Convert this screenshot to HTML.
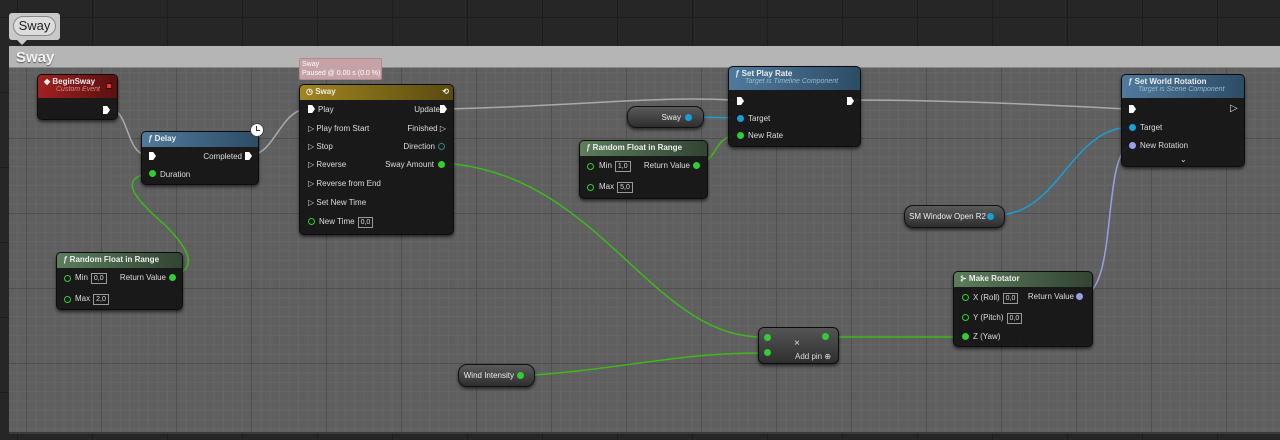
<!DOCTYPE html>
<html><head><meta charset="utf-8"><style>
*{margin:0;padding:0;box-sizing:border-box}
body{width:1280px;height:440px;overflow:hidden;background:#262626;font-family:"Liberation Sans",sans-serif;position:relative;
background-image:linear-gradient(90deg,#1c1c1c 1px,transparent 1px),linear-gradient(#1c1c1c 1px,transparent 1px);background-size:75px 75px;background-position:17px 17px}
.cm{position:absolute;left:9px;top:46px;width:1271px;height:388px;background-color:#5f5f5f;
background-image:linear-gradient(90deg,#4f4f4f 1px,transparent 1px),linear-gradient(#4f4f4f 1px,transparent 1px),linear-gradient(90deg,#666 1px,transparent 1px),linear-gradient(#666 1px,transparent 1px);
background-size:75px 75px,75px 75px,9.375px 9.375px,9.375px 9.375px;background-position:17px 0,0 17px,17px 0,0 17px;border-bottom:2px solid #3a3a3a}
.ch{position:absolute;left:9px;top:46px;width:1271px;height:22px;background:#b5b5b5;color:#f4f4f4;font-weight:bold;font-size:15px;padding:3px 0 0 7px;text-shadow:0 1px 1px #555;border-bottom:1px solid #888}
.bubble{position:absolute;left:9px;top:13px;width:51px;height:27px;background:#c9c9c9;border-radius:3px}
.bubble:after{content:"";position:absolute;left:8px;bottom:-5px;border-left:5px solid transparent;border-right:5px solid transparent;border-top:5px solid #c9c9c9}
.bubble span{position:absolute;left:4px;top:3px;width:43px;height:20px;border:1px solid #888;border-radius:10px;background:#ddd;font-size:13px;color:#222;text-align:center;line-height:18px}
.n{position:absolute;background:rgba(20,20,20,.92);border:1px solid #0c0c0c;border-radius:5px;box-shadow:0 2px 3px rgba(0,0,0,.6);color:#ddd;font-size:8px}
.h{height:15px;border-radius:4px 4px 0 0;padding:2px 0 0 6px;color:#eee;font-weight:bold;font-size:8px}
.blue{background:linear-gradient(90deg,#4f7a9c,#2d4c66)}
.green{background:linear-gradient(90deg,#5c7d5c,#324432)}
.p{position:absolute;font-size:8px;color:#ddd;white-space:nowrap}
.v{display:inline-block;border:1px solid #999;padding:0 2px;font-size:7px;line-height:9px;margin-left:3px}
.var{position:absolute;border-radius:9px;background:linear-gradient(#5a5a5a,#2e2e2e);border:1px solid #111;box-shadow:0 2px 3px rgba(0,0,0,.6);color:#eee;font-size:8px;text-align:right;padding:6px 18px 0 0;white-space:nowrap}
.dot{position:absolute;width:7px;height:7px;border-radius:50%}
.exe{position:absolute;width:7px;height:8px;background:#fff;clip-path:polygon(0 0,60% 0,100% 50%,60% 100%,0 100%)}
</style></head><body>
<div class="bubble"><span>Sway</span></div>
<div class="cm"></div>
<div class="ch">Sway</div>

<svg style="position:absolute;left:0;top:0" width="1280" height="440" fill="none">
<g stroke="#aaa" stroke-width="1.5">
<path d="M109 109 C130 109,125 155,148 155"/>
<path d="M250 155 C275 155,280 109,308 109"/>
<path d="M445 109 C600 105,650 96,735 100"/>
<path d="M852 100 C950 100,1050 105,1128 109"/>
</g>
<g stroke="#3cba1a" stroke-width="1.5">
<path d="M150 173 C120 178,130 195,165 225 C200 260,190 270,172 277"/>
<path d="M440 163 C600 170,650 340,765 337"/>
<path d="M520 376 C620 370,680 352,765 353"/>
<path d="M825 337 L958 337"/>
<path d="M697 165 C720 160,712 135,740 135"/>
</g>
<path d="M690 117 L740 118" stroke="#1a9ed8" stroke-width="1.5"/>
<path d="M996 215 C1060 215,1070 127,1132 127" stroke="#1a9ed8" stroke-width="1.5"/>
<path d="M1080 296 C1120 296,1100 150,1132 145" stroke="#9a9ee8" stroke-width="1.5"/>
</svg>

<div class="n" style="left:37px;top:74px;width:81px;height:46px">
<div style="height:23px;background:linear-gradient(90deg,#a02020,#5a1010);border-radius:4px 4px 0 0;padding:2px 0 0 6px;font-weight:bold;color:#eee">◆ BeginSway<div style="font-weight:normal;font-style:italic;color:#d88;font-size:7px;padding-left:12px">Custom Event</div></div>
<div style="position:absolute;right:5px;top:8px;width:6px;height:6px;background:#e33;border:1px solid #300"></div>
<div class="exe" style="left:65px;top:31px"></div></div>

<div class="n" style="left:141px;top:131px;width:118px;height:54px">
<div class="h blue"><i>ƒ</i> Delay</div>
<div class="exe" style="left:7px;top:20px"></div>
<div class="p" style="right:16px;top:20px">Completed</div><div class="exe" style="left:103px;top:20px"></div>
<div class="dot" style="left:7px;top:38px;background:#3c3"></div><div class="p" style="left:18px;top:38px">Duration</div></div>
<div style="position:absolute;left:250px;top:123px;width:14px;height:14px;border-radius:50%;background:#fff;border:1px solid #444"><div style="position:absolute;left:5px;top:2px;width:4px;height:5px;border-left:1px solid #333;border-bottom:1px solid #333"></div></div>

<div style="position:absolute;left:299px;top:58px;width:83px;height:22px;background:#c5a2a6;border:1px solid #b08a8e;border-radius:2px;color:#fff;font-size:7px;padding:1px 2px;line-height:9px;white-space:nowrap;overflow:hidden">Sway<br>Paused @ 0.00 s (0.0 %)</div>

<div class="n" style="left:299px;top:84px;width:155px;height:151px">
<div class="h" style="background:linear-gradient(90deg,#a0861f,#5a4a10)">◷ Sway<span style="position:absolute;right:4px">⟲</span></div>
<div class="exe" style="left:8px;top:20px"></div><div class="p" style="left:18px;top:20px">Play</div>
<div class="p" style="right:13px;top:20px">Update</div><div class="exe" style="left:140px;top:20px"></div>
<div class="p" style="left:8px;top:39px">▷ Play from Start</div><div class="p" style="right:7px;top:39px">Finished ▷</div>
<div class="p" style="left:8px;top:57px">▷ Stop</div><div class="p" style="right:18px;top:57px">Direction</div><div class="dot" style="left:138px;top:58px;border:1.5px solid #2a8a88"></div>
<div class="p" style="left:8px;top:75px">▷ Reverse</div><div class="p" style="right:19px;top:75px">Sway Amount</div><div class="dot" style="left:138px;top:76px;background:#3c3"></div>
<div class="p" style="left:8px;top:94px">▷ Reverse from End</div>
<div class="p" style="left:8px;top:113px">▷ Set New Time</div>
<div class="dot" style="left:8px;top:133px;border:1.5px solid #3c3"></div><div class="p" style="left:19px;top:132px">New Time<span class="v">0,0</span></div></div>

<div class="n" style="left:56px;top:252px;width:127px;height:58px">
<div class="h green"><i>ƒ</i> Random Float in Range</div>
<div class="dot" style="left:7px;top:22px;border:1.5px solid #3c3"></div><div class="p" style="left:18px;top:20px">Min<span class="v">0,0</span></div>
<div class="p" style="right:16px;top:20px">Return Value</div><div class="dot" style="left:112px;top:21px;background:#3c3"></div>
<div class="dot" style="left:7px;top:43px;border:1.5px solid #3c3"></div><div class="p" style="left:18px;top:41px">Max<span class="v">2,0</span></div></div>

<div class="var" style="left:627px;top:106px;width:77px;height:22px;padding-right:22px">Sway</div><div class="dot" style="left:685px;top:114px;background:#1a9ed8"></div>

<div class="n" style="left:728px;top:66px;width:133px;height:81px">
<div style="height:23px;background:linear-gradient(90deg,#4f7a9c,#2d4c66);border-radius:4px 4px 0 0;padding:2px 0 0 6px;font-weight:bold;color:#eee"><i>ƒ</i> Set Play Rate<div style="font-weight:normal;font-style:italic;color:#9bc;font-size:7px;padding-left:10px">Target is Timeline Component</div></div>
<div class="exe" style="left:8px;top:30px"></div><div class="exe" style="left:118px;top:30px"></div>
<div class="dot" style="left:8px;top:48px;background:#1a9ed8"></div><div class="p" style="left:19px;top:47px">Target</div>
<div class="dot" style="left:8px;top:65px;background:#3c3"></div><div class="p" style="left:19px;top:64px">New Rate</div></div>

<div class="n" style="left:579px;top:140px;width:129px;height:59px">
<div class="h green"><i>ƒ</i> Random Float in Range</div>
<div class="dot" style="left:7px;top:22px;border:1.5px solid #3c3"></div><div class="p" style="left:19px;top:20px">Min<span class="v">1,0</span></div>
<div class="p" style="right:17px;top:20px">Return Value</div><div class="dot" style="left:113px;top:21px;background:#3c3"></div>
<div class="dot" style="left:7px;top:43px;border:1.5px solid #3c3"></div><div class="p" style="left:19px;top:41px">Max<span class="v">5,0</span></div></div>

<div class="n" style="left:1121px;top:74px;width:124px;height:93px">
<div style="height:23px;background:linear-gradient(90deg,#4f7a9c,#2d4c66);border-radius:4px 4px 0 0;padding:2px 0 0 6px;font-weight:bold;color:#eee"><i>ƒ</i> Set World Rotation<div style="font-weight:normal;font-style:italic;color:#9bc;font-size:7px;padding-left:10px">Target is Scene Component</div></div>
<div class="exe" style="left:7px;top:30px"></div><div class="p" style="left:108px;top:28px;font-size:10px">▷</div>
<div class="dot" style="left:7px;top:49px;background:#1a9ed8"></div><div class="p" style="left:18px;top:48px">Target</div>
<div class="dot" style="left:7px;top:67px;background:#9a9ee8"></div><div class="p" style="left:18px;top:66px">New Rotation</div>
<div class="p" style="left:58px;top:80px">⌄</div></div>

<div class="var" style="left:904px;top:205px;width:101px;height:23px">SM Window Open R2</div><div class="dot" style="left:987px;top:213px;background:#1a9ed8"></div>

<div class="n" style="left:953px;top:271px;width:140px;height:76px">
<div class="h green">⊱ Make Rotator</div>
<div class="dot" style="left:8px;top:22px;border:1.5px solid #3c3"></div><div class="p" style="left:19px;top:21px">X (Roll)<span class="v">0,0</span></div>
<div class="p" style="right:18px;top:20px">Return Value</div><div class="dot" style="left:122px;top:21px;background:#9a9ee8"></div>
<div class="dot" style="left:8px;top:42px;border:1.5px solid #3c3"></div><div class="p" style="left:19px;top:41px">Y (Pitch)<span class="v">0,0</span></div>
<div class="dot" style="left:8px;top:61px;background:#3c3"></div><div class="p" style="left:19px;top:60px">Z (Yaw)</div></div>

<div class="n" style="left:758px;top:327px;width:81px;height:37px;background:linear-gradient(#555,#2e2e2e);border-radius:6px">
<div class="dot" style="left:5px;top:6px;background:#3c3"></div><div class="dot" style="left:63px;top:5px;background:#3c3"></div>
<div class="dot" style="left:5px;top:21px;background:#3c3"></div>
<div class="p" style="left:35px;top:10px;font-size:10px">×</div>
<div class="p" style="left:36px;top:24px">Add pin ⊕</div></div>

<div class="var" style="left:458px;top:364px;width:77px;height:23px;padding-right:20px">Wind Intensity</div><div class="dot" style="left:517px;top:372px;background:#3c3"></div>
</body></html>
